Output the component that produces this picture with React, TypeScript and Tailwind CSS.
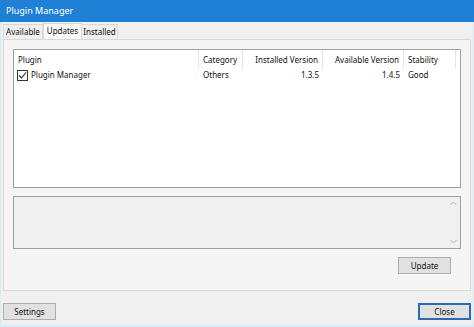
import React from "react";

const font = { fontFamily: '"Noto Sans", "Open Sans", "Liberation Sans", sans-serif' };

type Col = { label: string; width: string; align: "left" | "right" };

const cols: Col[] = [
  { label: "Plugin", width: "w-[185px]", align: "left" },
  { label: "Category", width: "w-[44px]", align: "left" },
  { label: "Installed Version", width: "w-[80px]", align: "right" },
  { label: "Available Version", width: "w-[81px]", align: "right" },
  { label: "Stability", width: "w-[52px]", align: "left" },
];

function Check() {
  return (
    <span className="flex h-[11px] w-[11px] items-center justify-center border border-[#333] bg-white">
      <svg width="9" height="9" viewBox="0 0 9 9">
        <path d="M1 4.5 L3.5 7 L8 1.5" fill="none" stroke="#222" strokeWidth="1.1" />
      </svg>
    </span>
  );
}

function Btn({ children, primary = false }: { children: React.ReactNode; primary?: boolean }) {
  return (
    <button
      type="button"
      className={
        primary
          ? "flex h-[17px] w-[53px] items-center justify-center border-2 border-[#2a6bb3] bg-[#e1e1e1] text-[8px] text-[#111]"
          : "flex h-[17px] w-[53px] items-center justify-center border border-[#adadad] bg-[#e1e1e1] text-[8px] text-[#111]"
      }
    >
      {children}
    </button>
  );
}

export default function App() {
  return (
    <div style={font} className="flex h-[327px] w-[474px] flex-col bg-[#f0f0f0] text-[#111]">
      <div className="flex h-[22px] shrink-0 items-center bg-[#1f80d6] px-[6px] text-[9px] text-white">
        Plugin Manager
      </div>

      <div className="flex flex-1 flex-col border-x border-b-2 border-[#d6ecf7]">
        <div className="flex h-[17px] items-end pl-[2px] text-[8px]">
          <div className="flex h-[15px] w-[40px] items-center justify-center border border-b-0 border-[#d9d9d9]">
            Available
          </div>
          <div className="-mb-px flex h-[17px] w-[39px] items-center justify-center border border-b-0 border-[#d9d9d9] bg-[#fbfbfb] pb-[2px]">
            Updates
          </div>
          <div className="flex h-[15px] w-[36px] items-center justify-center border border-b-0 border-l-0 border-[#d9d9d9]">
            Installed
          </div>
        </div>

        <div className="mx-[2px] flex h-[252px] flex-col border border-[#d9d9d9] bg-[#f5f5f5] px-[9px] pt-[9px]">
          <div className="h-[139px] border border-[#a0a0a0] bg-white text-[8px]">
            <div className="flex h-[19px] items-center">
              {cols.map((c) => (
                <div
                  key={c.label}
                  className={`${c.width} flex h-full items-center border-r border-[#e5e5e5] px-[4px] ${
                    c.align === "right" ? "justify-end" : ""
                  }`}
                >
                  {c.label}
                </div>
              ))}
            </div>
            <div className="flex h-[12px] items-center">
              <div className="flex w-[185px] items-center gap-[3px] pl-[3px]">
                <Check />
                <span>Plugin Manager</span>
              </div>
              <div className="w-[44px] px-[4px]">Others</div>
              <div className="w-[80px] px-[4px] text-right">1.3.5</div>
              <div className="w-[81px] px-[4px] text-right">1.4.5</div>
              <div className="w-[52px] px-[4px]">Good</div>
            </div>
          </div>

          <div className="mt-[8px] flex h-[53px] justify-end border border-[#a0a0a0] bg-[#f0f0f0]">
            <div className="flex w-[14px] flex-col items-center justify-between py-[4px] text-[#b5b5b5]">
              <svg width="7" height="5" viewBox="0 0 7 5">
                <path d="M0.5 4 L3.5 1 L6.5 4" fill="none" stroke="currentColor" strokeWidth="1" />
              </svg>
              <svg width="7" height="5" viewBox="0 0 7 5">
                <path d="M0.5 1 L3.5 4 L6.5 1" fill="none" stroke="currentColor" strokeWidth="1" />
              </svg>
            </div>
          </div>

          <div className="mt-[8px] flex justify-end pr-[10px]">
            <Btn>Update</Btn>
          </div>
        </div>

        <div className="mt-auto flex items-center justify-between px-[2px] pb-[5px]">
          <Btn>Settings</Btn>
          <Btn primary>Close</Btn>
        </div>
      </div>
    </div>
  );
}
